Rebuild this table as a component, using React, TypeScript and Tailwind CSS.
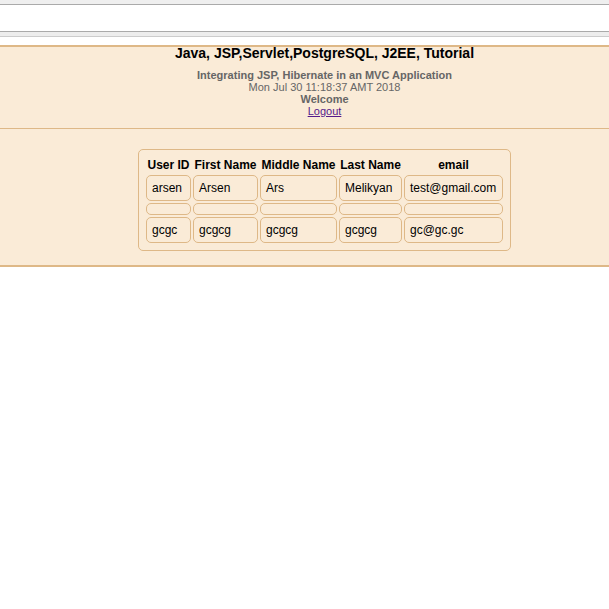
import React from 'react';

const users = [
  { id: 'arsen', first: 'Arsen', middle: 'Ars', last: 'Melikyan', email: 'test@gmail.com' },
  { id: '', first: '', middle: '', last: '', email: '' },
  { id: 'gcgc', first: 'gcgcg', middle: 'gcgcg', last: 'gcgcg', email: 'gc@gc.gc' },
];

const headers = [
  { label: 'User ID', w: 'w-[45px]' },
  { label: 'First Name', w: 'w-[65px]' },
  { label: 'Middle Name', w: 'w-[77px]' },
  { label: 'Last Name', w: 'w-[63px]' },
  { label: 'email', w: 'w-[99px]' },
];

export default function App() {
  return (
    <div className="min-h-[609px] bg-white font-['Liberation_Sans',Arial,sans-serif] text-black">
      {/* fake toolbar strip */}
      <div className="h-[4px] bg-[#efefef]" />
      <div className="h-[1px] bg-[#aaaaaa]" />
      <div className="h-[26px] bg-white" />
      <div className="h-[1px] bg-[#aaaaaa]" />
      <div className="h-[4px] bg-[#ededed]" />
      <div className="h-[1px] bg-[#cccccc]" />
      <div className="h-[8px] bg-white" />

      <div className="bg-[#faebd7] border-t-2 border-b-2 border-[#deb887]">
        {/* Header */}
        <div className="pl-[40px] text-center border-b border-[#deb887] pb-[11px]">
          <h1 className="text-[14px] font-bold leading-[14px] -mt-[1px]">Java, JSP,Servlet,PostgreSQL, J2EE, Tutorial</h1>
          <div className="mt-[9px] text-[11px] leading-[12px] text-[#666666]">
            <div className="font-bold">Integrating JSP, Hibernate in an MVC Application</div>
            <div>Mon Jul 30 11:18:37 AMT 2018</div>
            <div className="font-bold">Welcome</div>
            <a href="#" className="text-[#551a8b] underline">Logout</a>
          </div>
        </div>

        {/* Users table */}
        <div className="pl-[40px] pt-[20px] pb-[14px] flex justify-center">
          <table className="border-separate border-spacing-[2px] border border-[#deb887] rounded-[5px] p-[5px] text-[12px]">
            <thead>
              <tr>
                {headers.map((h) => (
                  <th key={h.label} className={`${h.w} px-0 py-[1px] leading-[14px] font-bold text-center whitespace-nowrap`}>{h.label}</th>
                ))}
              </tr>
            </thead>
            <tbody>
              {users.map((u, i) => (
                <tr key={i}>
                  {[u.id, u.first, u.middle, u.last, u.email].map((v, j) => (
                    <td key={j} className="border border-[#deb887] rounded-[5px] p-[5px] leading-[14px] text-left">{v}</td>
                  ))}
                </tr>
              ))}
            </tbody>
          </table>
        </div>
      </div>
    </div>
  );
}
